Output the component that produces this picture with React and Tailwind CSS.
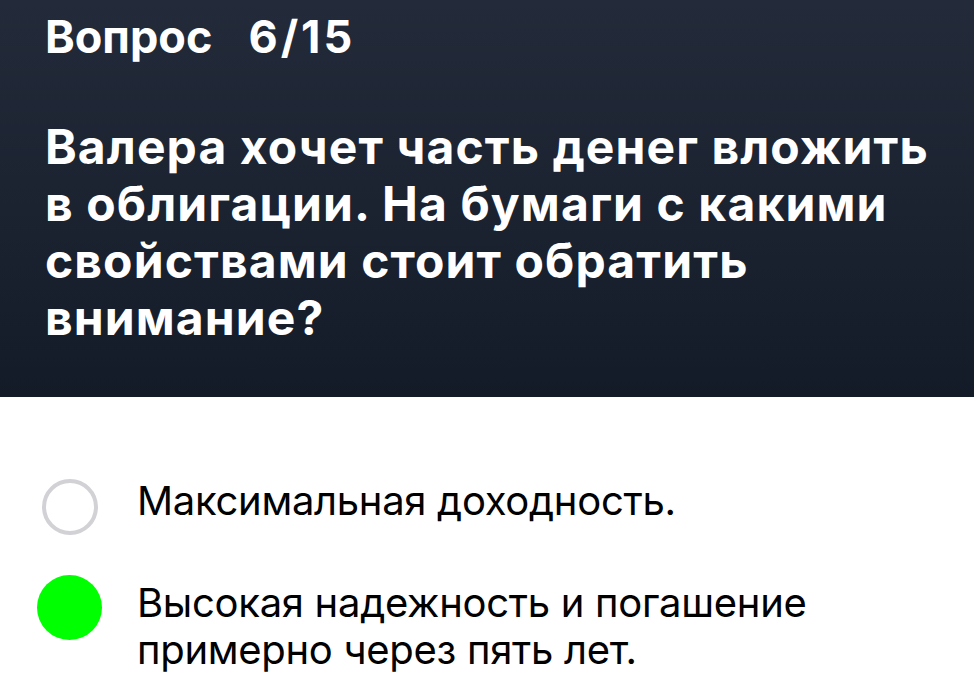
export default function App() {
  return (
    <div className="w-[974px] h-[685px] overflow-hidden bg-white" style={{ fontFamily: "Inter, 'Noto Sans', sans-serif" }}>
      <div className="h-[397px] bg-gradient-to-b from-[#232b3a] to-[#141b28] pl-[45px] pt-[11px] text-white">
        <div className="flex text-[45px] font-bold leading-[52px]">
          <span>Вопрос</span>
          <span className="ml-[36px] tracking-[3px]">6/15</span>
        </div>
        <div className="mt-[55px] text-[48px] font-bold leading-[57px] tracking-[1.1px]">
          Валера хочет часть денег вложить<br />
          в облигации. На бумаги с какими<br />
          свойствами стоит обратить<br />
          внимание?
        </div>
      </div>
      <div className="pt-[80px] text-black text-[40px] leading-[47px] tracking-[-0.3px]">
        <div className="flex items-start pl-[42px]">
          <div className="w-[56px] h-[56px] shrink-0 mt-[2px] rounded-full border-[4px] border-[#d1d1d6]" />
          <div className="ml-[39px]">Максимальная доходность.</div>
        </div>
        <div className="flex items-start pl-[37px] mt-[40px]">
          <div className="w-[65px] h-[65px] shrink-0 rounded-full bg-[#00ff00]" />
          <div className="ml-[35px] mt-[4px]">
            Высокая надежность и погашение<br />примерно через пять лет.
          </div>
        </div>
      </div>
    </div>
  );
}
